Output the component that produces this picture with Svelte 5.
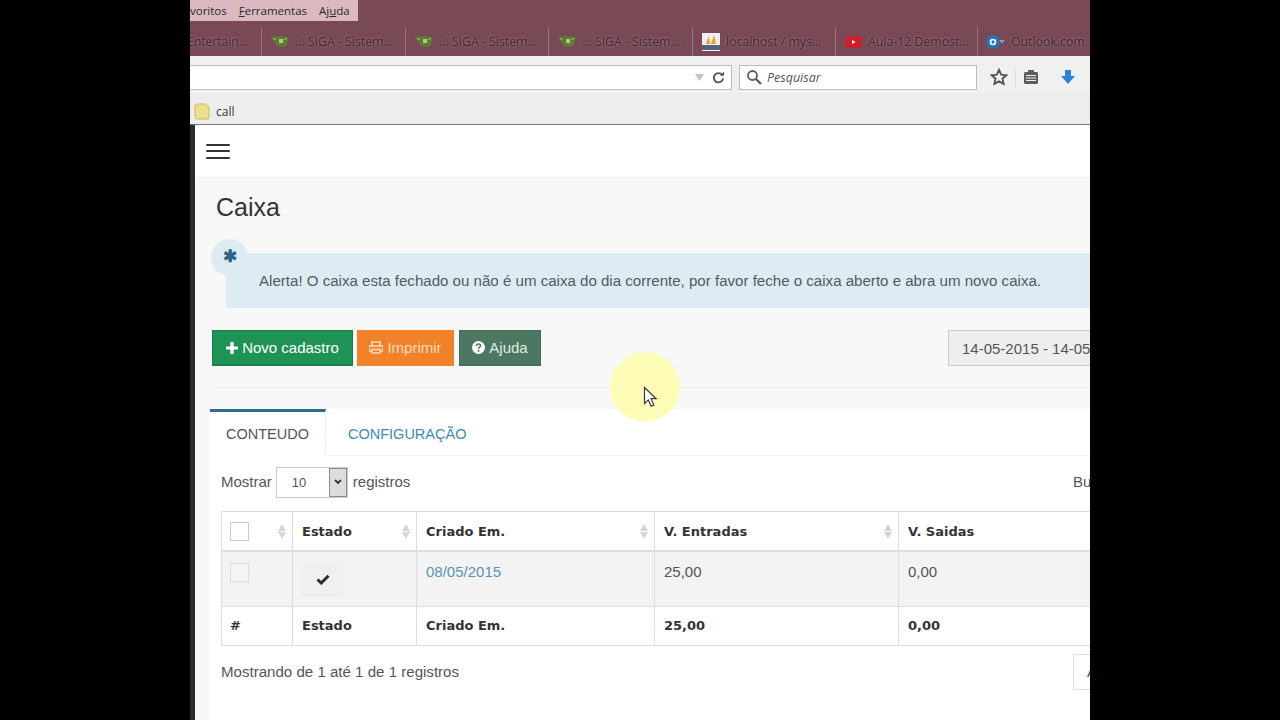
<script>
  const tabs = [
    { label: "Entertain...", icon: "none", width: 72 },
    { label: "..: SIGA - Sistem...", icon: "siga", width: 144 },
    { label: "..: SIGA - Sistem...", icon: "siga", width: 143 },
    { label: "..: SIGA - Sistem...", icon: "siga", width: 144 },
    { label: "localhost / mys...", icon: "pma", width: 143 },
    { label: "Aula-12 Demost...", icon: "yt", width: 142 },
    { label: "Outlook.com", icon: "outlook", width: 112 }
  ];
</script>

<div class="screen">
  <div class="titlebar">
    <div class="menu">
      <span>voritos</span>
      <span><u>F</u>erramentas</span>
      <span>Aj<u>u</u>da</span>
    </div>
    <div class="tabs">
      {#each tabs as tab}
        <div class="tab" class:first={tab.icon === "none"} style="width: {tab.width}px">
          {#if tab.icon === "siga"}
            <svg width="18" height="11" viewBox="0 0 18 11"><path d="M0 1l6-1 12 1-3 9-4 1-5-1z" fill="#5f7a35" /><path d="M8 3h4v4H8z" fill="#b7c48e" /><path d="M2 2h3v2H2zM13 2h3v2h-3z" fill="#86994f" /></svg>
          {:else if tab.icon === "pma"}
            <svg width="18" height="18" viewBox="0 0 18 18"><rect width="18" height="18" fill="#eee" /><path d="M4 11l3-8 1 8zM9 11l3-9 2 9z" fill="#e2a22c" /><rect y="12" width="18" height="5" fill="#55617f" /></svg>
          {:else if tab.icon === "yt"}
            <svg width="17" height="12" viewBox="0 0 17 12"><rect width="17" height="12" rx="2.5" fill="#c9202b" /><path d="M7 4l3.5 2L7 8z" fill="#fff" /></svg>
          {:else if tab.icon === "outlook"}
            <svg width="18" height="16" viewBox="0 0 18 16"><circle cx="6" cy="8" r="7" fill="#2873b8" /><circle cx="6" cy="8" r="2.5" fill="none" stroke="#fff" stroke-width="1.6" /><path d="M13 6l2 2 2-2" fill="none" stroke="#8db9dd" stroke-width="1.5" /></svg>
          {/if}
          <span>{tab.label}</span>
        </div>
      {/each}
    </div>
  </div>

  <div class="navbar">
    <div class="urlbar">
      <svg width="9" height="7" viewBox="0 0 9 7"><path d="M0 0h9L4.5 7z" fill="#c2c5c5" /></svg>
      <svg width="13" height="13" viewBox="0 0 14 14"><path d="M11 4.2A5 5 0 1 0 12 8" fill="none" stroke="#555" stroke-width="2" /><path d="M8.5 5H13V.5z" fill="#555" /></svg>
    </div>
    <div class="searchbar">
      <svg width="16" height="16" viewBox="0 0 16 16"><circle cx="6.5" cy="6.5" r="4.5" fill="none" stroke="#5c5c5c" stroke-width="1.8" /><path d="M10 10l5 5" stroke="#5c5c5c" stroke-width="2.4" /></svg>
      <span>Pesquisar</span>
    </div>
    <svg class="star" width="18" height="18" viewBox="0 0 18 18"><path d="M9 1.8l2.2 4.8 5.2.6-3.9 3.5 1.1 5.2L9 13.3l-4.6 2.6 1.1-5.2L1.6 7.2l5.2-.6z" fill="none" stroke="#555" stroke-width="1.9" /></svg>
    <i class="sep"></i>
    <svg class="clip" width="16" height="16" viewBox="0 0 16 16"><rect x="1" y="3" width="14" height="12" rx="1.5" fill="#5c5c5c" /><rect x="5" y="1" width="6" height="3" fill="#5c5c5c" /><path d="M3 6.5h10M3 9h10M3 11.5h10" stroke="#eee" /></svg>
    <svg class="down" width="16" height="16" viewBox="0 0 16 16"><path d="M5 1h6v6h4l-7 8-7-8h4z" fill="#2b82d6" /></svg>
  </div>

  <div class="bookmarks">
    <svg width="16" height="17" viewBox="0 0 16 17"><path d="M1 3q0-2 2-2h8l4 3v10q0 2-2 2H3q-2 0-2-2z" fill="#eedf8c" stroke="#c8b860" /></svg>
    <span>call</span>
  </div>

  <div class="page">
    <header class="topbar">
      <div class="burger"><i></i><i></i><i></i></div>
    </header>

    <main class="content">
      <h1>Caixa</h1>

      <div class="alert">
        <div class="alert-badge">✱</div>
        Alerta! O caixa esta fechado ou não é um caixa do dia corrente, por favor feche o caixa aberto e abra um novo caixa.
      </div>

      <div class="actions">
        <button class="btn green">
          <svg width="12" height="12" viewBox="0 0 12 12"><path d="M4.4 0h3.2v4.4H12v3.2H7.6V12H4.4V7.6H0V4.4h4.4z" fill="#fff" /></svg>
          Novo cadastro
        </button>
        <button class="btn orange">
          <svg width="14" height="13" viewBox="0 0 14 13"><path d="M3 5V1h8v4M3 10H0V6q0-1 1-1h12q1 0 1 1v4h-3M3 8.5h8V12H3z" fill="none" stroke="#fdd9bb" stroke-width="1.7" /></svg>
          Imprimir
        </button>
        <button class="btn slate">
          <svg width="13" height="13" viewBox="0 0 13 13"><circle cx="6.5" cy="6.5" r="6.5" fill="#fff" /><path d="M4.4 5q.2-2 2.2-2t2 1.7c0 1.5-2 1.5-2 3" fill="none" stroke="#4c7760" stroke-width="1.6" /><rect x="5.7" y="9" width="1.7" height="1.7" fill="#4c7760" /></svg>
          Ajuda
        </button>
        <div class="daterange">14-05-2015 - 14-05-2015</div>
      </div>
      <div class="rule"></div>

      <section class="panel">
        <div class="panel-tabs">
          <div class="ptab active">CONTEUDO</div>
          <div class="ptab">CONFIGURAÇÃO</div>
        </div>

        <div class="panel-body">
          <div class="table-tools">
            <label>
              Mostrar
              <span class="select">
                <span>10</span>
                <span class="select-arrow">
                  <svg width="8" height="6" viewBox="0 0 8 6"><path d="M1 1l3 3 3-3" fill="none" stroke="#333" stroke-width="1.8" /></svg>
                </span>
              </span>
              registros
            </label>
            <span class="search-label">Buscar:</span>
          </div>

          <table>
            <thead>
              <tr>
                <th class="c1"><span class="check"></span><span class="sort"></span></th>
                <th class="c2">Estado<span class="sort"></span></th>
                <th class="c3">Criado Em.<span class="sort"></span></th>
                <th class="c4">V. Entradas<span class="sort"></span></th>
                <th class="c5">V. Saidas<span class="sort"></span></th>
              </tr>
            </thead>
            <tbody>
              <tr>
                <td><span class="check faint"></span></td>
                <td><span class="state-btn"><svg width="14" height="11" viewBox="0 0 14 11"><path d="M1.5 5.5l3.7 3.5L12.5 1.8" fill="none" stroke="#2b2b2b" stroke-width="3" /></svg></span></td>
                <td><a href="#top">08/05/2015</a></td>
                <td>25,00</td>
                <td>0,00</td>
              </tr>
            </tbody>
            <tfoot>
              <tr>
                <th>#</th>
                <th>Estado</th>
                <th>Criado Em.</th>
                <th>25,00</th>
                <th>0,00</th>
              </tr>
            </tfoot>
          </table>

          <div class="table-foot">
            <span>Mostrando de 1 até 1 de 1 registros</span>
            <span class="pager">Anterior</span>
          </div>
        </div>
      </section>
    </main>

    <div class="highlight"></div>
    <svg class="cursor" width="15" height="22" viewBox="0 0 15 22"><path d="M1.5 1.5v16l3.8-3.6 2.8 6.4 2.8-1.2-2.8-6.4h5z" fill="#fff" stroke="#3a3a3a" stroke-width="1.2" /></svg>
  </div>
</div>

<style>
  :global(body) {
    margin: 0;
    background: #000;
  }

  .screen {
    width: 900px;
    height: 720px;
    margin: 0 auto;
    overflow: hidden;
    font-family: "Liberation Sans", Arial, sans-serif;
    color: #444;
    background: #f8f8f8;
    display: flex;
    flex-direction: column;
  }

  .titlebar {
    height: 56px;
    flex: none;
    background: #794a55;
    overflow: hidden;
  }

  .menu {
    width: 168px;
    height: 21px;
    background: #dcb9c0;
    display: flex;
    align-items: center;
    gap: 12px;
    font: 11.5px "Open Sans", sans-serif;
    color: #2b2b2b;
  }

  .tabs {
    display: flex;
    margin-top: 6px;
    height: 29px;
  }

  .tab {
    flex: none;
    box-sizing: border-box;
    display: flex;
    align-items: center;
    gap: 6px;
    padding-left: 9px;
    white-space: nowrap;
    border-right: 1px solid #94727a;
    font: 12.3px "Open Sans", sans-serif;
    color: #3f2630;
    text-shadow: 0 0 3px rgba(255, 255, 255, 0.35);
  }

  .tab.first {
    padding-left: 0;
    justify-content: flex-end;
    padding-right: 13px;
    overflow: hidden;
    font-size: 12px;
  }

  .tab:last-child {
    border-right: 0;
  }

  .navbar {
    height: 37px;
    flex: none;
    background: #f0f0f0;
    display: flex;
    align-items: center;
    box-sizing: border-box;
    padding-top: 5px;
  }

  .urlbar {
    width: 542px;
    height: 25px;
    box-sizing: border-box;
    background: #fff;
    border: 1px solid #bcbcbc;
    border-left: 0;
    display: flex;
    align-items: center;
    justify-content: flex-end;
    gap: 8px;
    padding-right: 6px;
  }

  .searchbar {
    width: 238px;
    height: 25px;
    box-sizing: border-box;
    margin-left: 7px;
    background: #fff;
    border: 1px solid #bcbcbc;
    display: flex;
    align-items: center;
    gap: 5px;
    padding-left: 6px;
    font: italic 12.5px "Open Sans", sans-serif;
    color: #555;
  }

  .star {
    margin-left: 13px;
  }

  .sep {
    width: 1px;
    height: 17px;
    margin-left: 7px;
    background: #ddd;
  }

  .clip {
    margin-left: 7px;
  }

  .down {
    margin-left: 21px;
  }

  .bookmarks {
    height: 32px;
    flex: none;
    box-sizing: border-box;
    background: #ededed;
    border-bottom: 1px solid #777;
    display: flex;
    align-items: center;
    gap: 6px;
    padding: 6px 0 0 4px;
    font: 12px "Open Sans", sans-serif;
    color: #333;
  }

  .page {
    position: relative;
    flex: 1;
    min-height: 0;
    border-left: 5px solid #2a2a2a;
    background: #f8f8f8;
  }

  .topbar {
    height: 52px;
    background: #fff;
    border-bottom: 1px solid #efefef;
    display: flex;
    align-items: center;
    padding-left: 11px;
  }

  .burger {
    display: flex;
    flex-direction: column;
    gap: 4.5px;
    width: 24px;
  }

  .burger i {
    display: block;
    height: 2px;
    border-radius: 1px;
    background: #333;
  }

  .content {
    padding: 0 0 0 15px;
    width: 900px;
  }

  h1 {
    margin: 14px 0 0 6px;
    font-size: 25px;
    font-weight: 400;
    line-height: 30px;
    color: #333;
  }

  .alert {
    position: relative;
    margin: 31px 0 0 16px;
    height: 55px;
    box-sizing: border-box;
    padding: 20px 0 0 33px;
    background: #deebf3;
    font-size: 15.08px;
    line-height: 16px;
    color: #4f5c64;
    white-space: nowrap;
  }

  .alert-badge {
    position: absolute;
    left: -15px;
    top: -14px;
    width: 37px;
    height: 37px;
    border-radius: 50%;
    background: #deebf3;
    color: #33637f;
    font-size: 17px;
    font-weight: 700;
    line-height: 35px;
    text-align: center;
  }

  .actions {
    display: flex;
    margin: 22px 0 0 2px;
    gap: 4px;
    align-items: flex-start;
  }

  .btn {
    flex: none;
    height: 36px;
    box-sizing: border-box;
    border: 1px solid transparent;
    border-bottom-width: 2px;
    padding: 0;
    display: flex;
    align-items: center;
    justify-content: center;
    gap: 4px;
    font-family: inherit;
    font-size: 15px;
    color: #fff;
  }

  .green {
    width: 141px;
    background: #1f9255;
    border-color: #1a8049;
  }

  .orange {
    width: 97px;
    background: #f2822a;
    border-color: #f2822a;
    color: #fdd9bb;
  }

  .slate {
    width: 82px;
    margin-left: 1px;
    background: #4c7760;
    border-color: #466e59;
    color: #e0eae5;
  }

  .daterange {
    margin-left: 403px;
    width: 200px;
    height: 36px;
    flex: none;
    box-sizing: border-box;
    border: 1px solid #ccc;
    background: #eee;
    padding-left: 13px;
    font-size: 15px;
    line-height: 35px;
    color: #555;
    white-space: nowrap;
  }

  .rule {
    margin: 21px 0 0 0;
    height: 1px;
    background: #f0f0f0;
  }

  .panel {
    margin: 21px 0 0 0;
    background: #fff;
    height: 320px;
  }

  .panel-tabs {
    display: flex;
    height: 47px;
    box-sizing: border-box;
    border-bottom: 1px solid #f1f1f1;
  }

  .ptab {
    box-sizing: border-box;
    padding: 17px 16px 0 22px;
    font-size: 14.5px;
    color: #3f8ab0;
  }

  .ptab.active {
    width: 116px;
    height: 47px;
    padding: 14px 0 0 16px;
    border-top: 3px solid #2d6c8c;
    border-right: 1px solid #f1f1f1;
    background: #fff;
    color: #555;
  }

  .panel-body {
    padding: 10px 0 0 11px;
    width: 889px;
    box-sizing: border-box;
  }

  .table-tools {
    display: flex;
    justify-content: space-between;
    align-items: center;
    height: 32px;
    padding-bottom: 2px;
    box-sizing: border-box;
    width: 900px;
    font-size: 15px;
    color: #555;
  }

  .table-tools label {
    display: flex;
    align-items: center;
    gap: 4px;
  }

  .search-label {
    width: 48px;
    flex: none;
    white-space: nowrap;
  }

  .select {
    width: 72px;
    height: 31px;
    margin: 2px 1px 0 0;
    box-sizing: border-box;
    border: 1px solid #ccc;
    background: #fff;
    display: flex;
    align-items: center;
    justify-content: space-between;
    padding-left: 15px;
    font-size: 13px;
  }

  .select-arrow {
    width: 18px;
    height: 29px;
    box-sizing: border-box;
    border: 1px solid #8b8b8b;
    background: #ddd;
    display: flex;
    align-items: center;
    justify-content: center;
  }

  table {
    margin-top: 13px;
    width: 900px;
    border-collapse: collapse;
    table-layout: fixed;
    font-size: 15px;
    color: #555;
  }

  th, td {
    border: 1px solid #ddd;
    padding: 0 9px;
    text-align: left;
    position: relative;
  }

  tr > :first-child {
    padding-left: 8px;
  }

  th {
    font-family: "DejaVu Sans", sans-serif;
    font-size: 13px;
    color: #333;
  }

  thead th {
    height: 38px;
    border-bottom: 2px solid #ddd;
  }

  tfoot th {
    height: 38px;
  }

  tbody tr {
    height: 55px;
    background: #f3f3f3;
  }

  tbody td {
    vertical-align: top;
    padding-top: 11px;
  }

  .c1 { width: 53px; }
  .c2 { width: 105px; }
  .c3 { width: 219px; }
  .c4 { width: 225px; }
  .c5 { width: 225px; }

  a {
    color: #5c93b3;
    text-decoration: none;
  }

  .check {
    display: block;
    width: 19px;
    height: 19px;
    box-sizing: border-box;
    border: 1px solid #ccc;
    background: #fff;
  }

  .check.faint {
    border-color: #ddd;
    background: #f5f5f5;
  }

  .sort {
    position: absolute;
    right: 5px;
    top: calc(50% - 7px);
    width: 9px;
    height: 15px;
  }

  .sort::before, .sort::after {
    content: "";
    position: absolute;
    left: 0;
    border-left: 4.5px solid transparent;
    border-right: 4.5px solid transparent;
  }

  .sort::before {
    top: 0;
    border-bottom: 7px solid #d5d5d5;
  }

  .sort::after {
    bottom: 0;
    border-top: 7px solid #d5d5d5;
  }

  .state-btn {
    display: flex;
    width: 41px;
    height: 32px;
    align-items: center;
    justify-content: center;
    background: #f0f0f0;
    border-bottom: 1px solid #e6e6e6;
  }

  .table-foot {
    display: flex;
    justify-content: space-between;
    align-items: center;
    margin-top: 8px;
    font-size: 15.08px;
    color: #555;
    width: 922px;
  }

  .pager {
    flex: none;
    width: 70px;
    height: 36px;
    box-sizing: border-box;
    border: 1px solid #ddd;
    padding: 8px 0 0 13px;
    white-space: nowrap;
    background: #fff;
  }

  .highlight {
    position: absolute;
    left: 415px;
    top: 227px;
    width: 70px;
    height: 70px;
    border-radius: 50%;
    background: rgba(252, 252, 165, 0.8);
  }

  .cursor {
    position: absolute;
    left: 448px;
    top: 261px;
  }
</style>
